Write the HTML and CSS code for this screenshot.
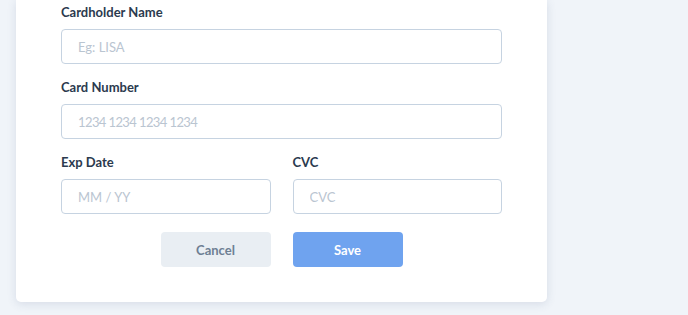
FILE: index.html
```html
<!DOCTYPE html>
<html>
<head>
<meta charset="utf-8">
<link rel="stylesheet" href="styles.css">
</head>
<body>
<div class="page">
  <form class="card">
    <div class="field">
      <label class="label">Cardholder Name</label>
      <input class="input" type="text" placeholder="Eg: LISA">
    </div>
    <div class="field">
      <label class="label">Card Number</label>
      <input class="input input-number" type="text" placeholder="1234 1234 1234 1234">
    </div>
    <div class="row">
      <div class="field">
        <label class="label">Exp Date</label>
        <input class="input" type="text" placeholder="MM / YY">
      </div>
      <div class="field">
        <label class="label">CVC</label>
        <input class="input" type="text" placeholder="CVC">
      </div>
    </div>
    <div class="actions">
      <button type="button" class="btn btn-cancel">Cancel</button>
      <button type="button" class="btn btn-save">Save</button>
    </div>
  </form>
</div>
</body>
</html>
```
FILE: styles.css
```css
* { box-sizing: border-box; }
html, body {
  margin: 0;
  background: #f0f4f9;
  font-family: "Lato", "Open Sans", sans-serif;
}
.page {
  padding: 0 0 0 16px;
  height: 315px;
  overflow: hidden;
}
.card {
  width: 531px;
  background: #ffffff;
  border-radius: 0 0 5px 5px;
  box-shadow: 0 2px 10px rgba(60, 80, 120, 0.14);
  padding: 4px 45px 35px;
  display: flex;
  flex-direction: column;
  gap: 15px;
}
.field {
  display: flex;
  flex-direction: column;
  gap: 9px;
}
.label {
  font-size: 13px;
  line-height: 16px;
  font-weight: 700;
  color: #2b3a4e;
}
.input {
  height: 35px;
  width: 100%;
  border: 1.5px solid #c6d3e1;
  border-radius: 4px;
  padding: 0 16px;
  font-family: inherit;
  font-size: 13px;
  color: #2b3a4e;
  background: #fff;
  outline: none;
}
.input-number {
  letter-spacing: -0.6px;
}
.input::placeholder {
  color: #bac5d1;
}
.row {
  display: grid;
  grid-template-columns: 1fr 1fr;
  gap: 22px;
}
.actions {
  display: flex;
  justify-content: center;
  gap: 22px;
  margin-top: 3px;
}
.btn {
  width: 110px;
  height: 35px;
  border: none;
  border-radius: 4px;
  font-family: inherit;
  font-size: 13px;
  font-weight: 700;
  cursor: pointer;
}
.btn-cancel {
  background: #e9eef3;
  color: #6e7f93;
}
.btn-save {
  background: #6fa3ef;
  color: #ffffff;
}
```
